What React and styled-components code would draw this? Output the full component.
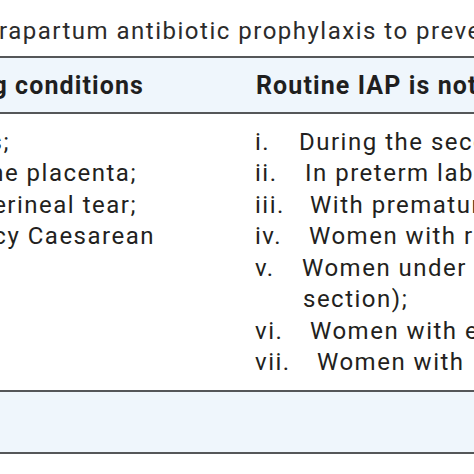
import React from "react";
import styled, { createGlobalStyle } from "styled-components";

const GlobalStyle = createGlobalStyle`
  html, body {
    margin: 0;
    padding: 0;
    background: #ffffff;
  }
  body {
    width: 474px;
    height: 474px;
    overflow: hidden;
    font-family: Roboto, "Liberation Sans", sans-serif;
    color: #231f20;
  }
`;

const Page = styled.div`
  width: 474px;
  overflow: hidden;
`;

const Caption = styled.div`
  padding: 16px 0 10px;
  margin-left: -1px;
  font-size: 24px;
  letter-spacing: 1.5px;
  line-height: 30px;
  white-space: nowrap;
  color: #2b2b2b;
`;

const Rule = styled.div`
  height: 2px;
  background: #555759;
`;

const Band = styled.div`
  display: grid;
  grid-template-columns: 237px 237px;
  height: ${(p) => p.$height}px;
  background: #eff6fc;
`;

const HeadCell = styled.div`
  display: flex;
  align-items: center;
  justify-content: ${(p) => (p.$alignEnd ? "flex-end" : "flex-start")};
  padding-left: ${(p) => p.$padLeft || 0}px;
  padding-right: ${(p) => p.$padRight || 0}px;
  font-size: 25px;
  letter-spacing: 1.1px;
  font-weight: 700;
  white-space: nowrap;
  color: #1f1f1f;
`;

const Body = styled.div`
  display: grid;
  grid-template-columns: 237px 237px;
  padding: 12px 0;
`;

const Column = styled.div`
  display: flex;
  flex-direction: column;
`;

const Line = styled.div`
  display: flex;
  justify-content: ${(p) => (p.$alignEnd ? "flex-end" : "flex-start")};
  height: 31.5px;
  align-items: center;
  padding-right: ${(p) => p.$padRight || 0}px;
  font-size: 24px;
  letter-spacing: 1.5px;
  white-space: nowrap;
`;

const Item = styled.div`
  display: flex;
  align-items: center;
  height: 31.5px;
  padding-left: 18px;
  font-size: 24px;
  letter-spacing: 1.5px;
  white-space: pre;
`;

const Numeral = styled.span`
  flex: 0 0 ${(p) => p.$space}px;
`;

const leftLines = [
  { text: "Instrumental deliveries;", end: 10 },
  { text: "Manual removal of the placenta;", end: 137 },
  { text: "Third or fourth degree perineal tear;", end: 137 },
  { text: "Emergency Caesarean", end: 155 },
];

const rightItems = [
  { num: "i.", space: 44, text: "During the second stage of labour;" },
  { num: "ii.", space: 50, text: "In preterm labour with intact membranes;" },
  { num: "iii.", space: 55, text: "With premature rupture of membranes;" },
  { num: "iv.", space: 54, text: "Women with rupture of membranes at term;" },
  { num: "v.", space: 47, text: "Women under    planned Caesarean" },
  { num: "", space: 48, text: "section);" },
  { num: "vi.", space: 55, text: "Women with early-onset disease;" },
  { num: "vii.", space: 62, text: "Women with      a previous baby;" },
];

export default function App() {
  return (
    <Page>
      <GlobalStyle />
      <Caption>rapartum antibiotic prophylaxis to prevent early-onset GBS disease</Caption>
      <Rule />
      <Band $height={54}>
        <HeadCell $alignEnd $padRight={93}>
          Routine IAP is recommended in the following conditions
        </HeadCell>
        <HeadCell $padLeft={19}>Routine IAP is not recommended</HeadCell>
      </Band>
      <Rule />
      <Body>
        <Column>
          {leftLines.map((l) => (
            <Line key={l.text} $alignEnd $padRight={237 - l.end}>
              {l.text}
            </Line>
          ))}
        </Column>
        <Column>
          {rightItems.map((it) => (
            <Item key={it.text}>
              <Numeral $space={it.space}>{it.num}</Numeral>
              <span>{it.text}</span>
            </Item>
          ))}
        </Column>
      </Body>
      <Rule />
      <Band $height={60} />
      <Rule />
    </Page>
  );
}
